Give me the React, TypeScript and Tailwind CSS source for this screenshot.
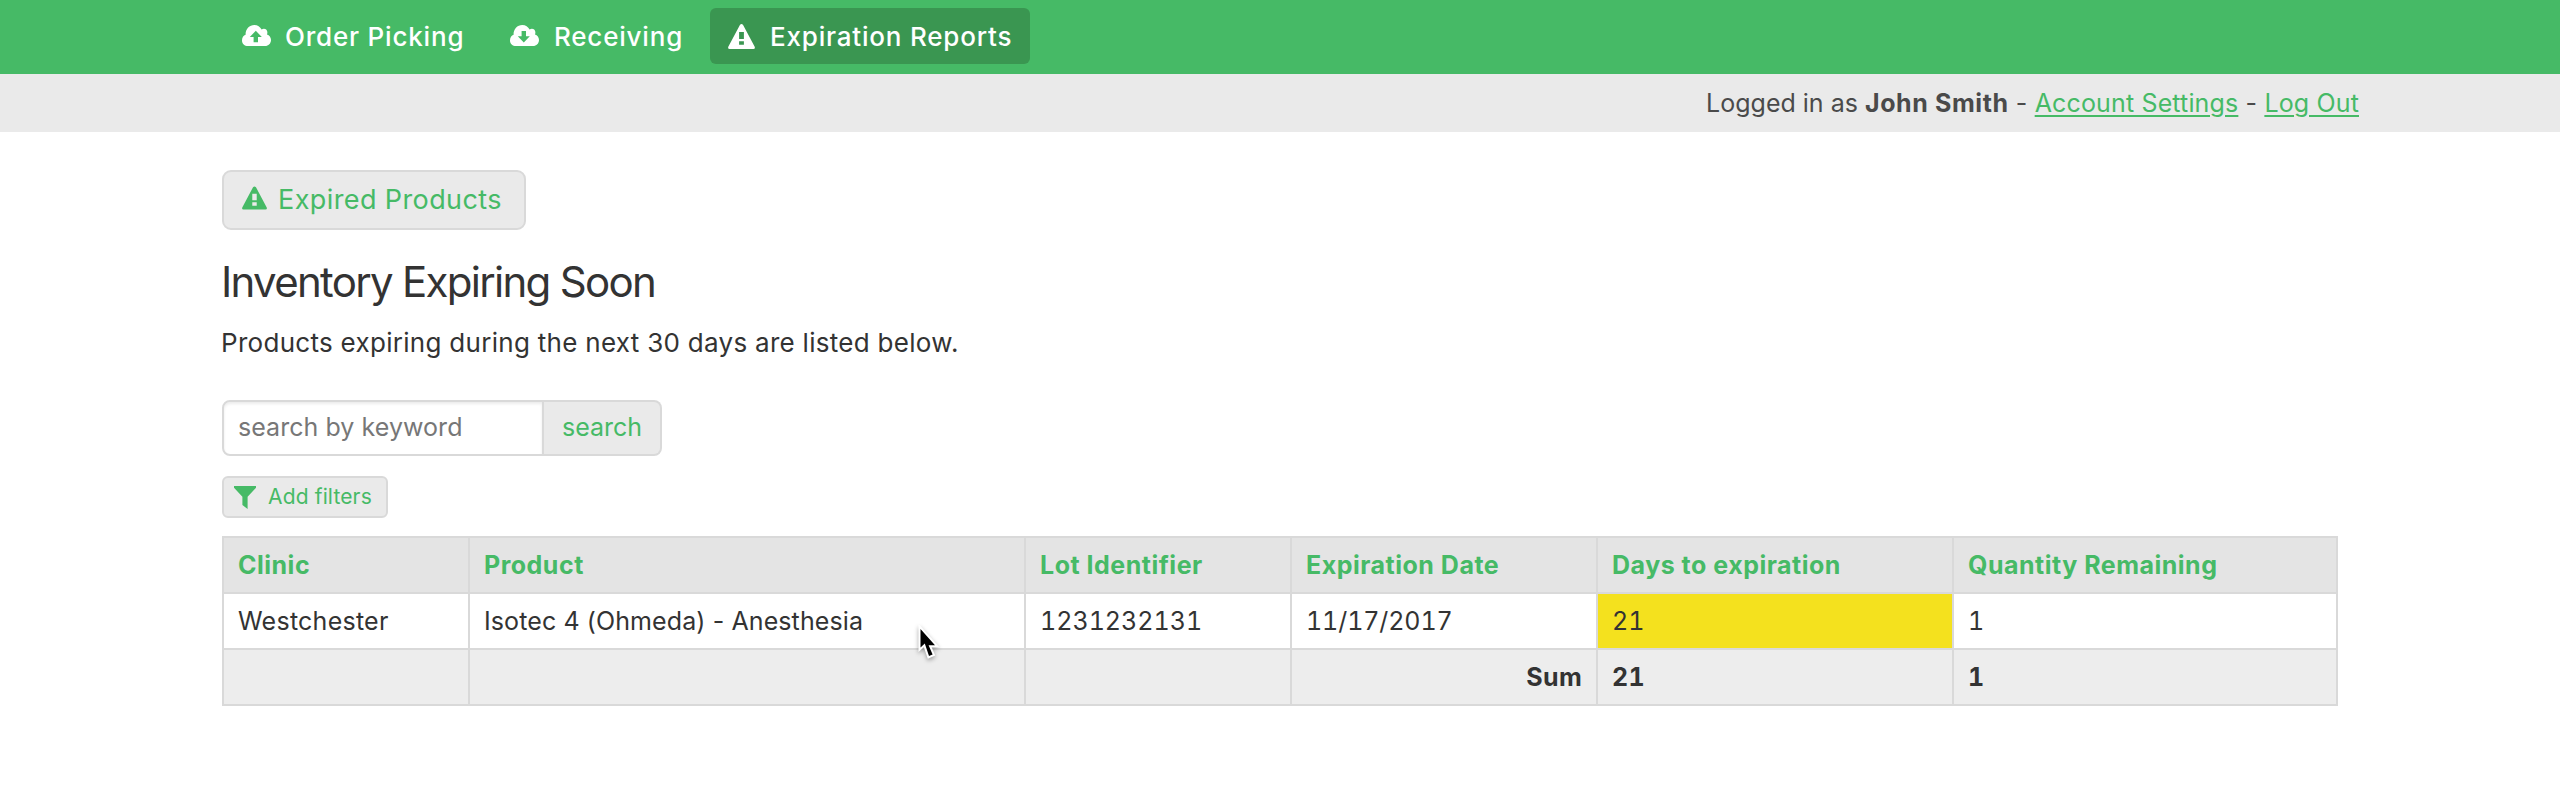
const CloudIcon = ({ down = false }: { down?: boolean }) => {
  return (
    <svg viewBox="0 0 29 21" className="h-[21px] w-[29px] shrink-0" fill="currentColor" fillRule="evenodd">
      <path
        d={
          "M6 21C2.6 21 0 18.7 0 15.4C0 12.6 1.4 10.6 3.6 9.8C3.3 4.2 7.4 0 12.3 0C15.6 0 18.2 1.8 19.6 4.5C20.4 4 21 3.8 21.8 3.8C24 3.8 25.4 5.4 25.4 7.4C25.4 8.1 25.2 8.8 25 9.4C27.4 10.1 29 12.3 29 15C29 18.4 26.5 21 23 21Z" +
          (down
            ? "M11.6 6V11.2H7.8L13.8 17.4L19.8 11.2H16V6Z"
            : "M13.8 5.8L7.8 12H11.6V17.2H16V12H19.8Z")
        }
      />
    </svg>
  );
};

const WarningIcon = ({ className }: { className: string }) => {
  return (
    <svg viewBox="0 0 27 25" className={className} fill="currentColor" fillRule="evenodd">
      <path d="M11.9 1Q13.5 -1 15.1 1L26.7 22.8Q27.4 25 25.4 25H1.6Q-0.4 25 0.3 22.8ZM11.1 8V15H15.9V8ZM11.1 17.2V20.8H15.9V17.2Z" />
    </svg>
  );
};

const Header = () => {
  return (
    <header className="bg-[#46ba66] h-[74px] pl-[224px] pt-2">
      <nav className="flex gap-2 text-white text-[26px] font-[450] tracking-[0.8px]">
        <a className="flex items-center w-[260px] h-14 pl-[18px] pb-px" href="#">
          <CloudIcon />
          <span className="ml-[14px] pt-px">Order Picking</span>
        </a>
        <a className="flex items-center w-[210px] h-14 pl-[18px] pb-px" href="#">
          <CloudIcon down />
          <span className="ml-[15px] pt-px">Receiving</span>
        </a>
        <a className="flex items-center w-80 h-14 pl-[18px] rounded-md bg-[#3a9651]" href="#">
          <WarningIcon className="h-[25px] w-[27px] shrink-0" />
          <span className="ml-[15px]">Expiration Reports</span>
        </a>
      </nav>
    </header>
  );
};

const UserBar = () => {
  return (
    <div className="flex items-center justify-end h-[58px] pr-[201px] pt-px bg-[#eaeaea] text-[25px] tracking-[0.15px] text-[#4a4a4a] whitespace-pre">
      <span className="tracking-normal">Logged in as </span>
      <strong className="font-bold tracking-[0.6px]">John Smith</strong>
      <span> - </span>
      <a className="text-[#46ba66] underline decoration-2 underline-offset-[3px]" href="#">
        Account Settings
      </a>
      <span> - </span>
      <a className="text-[#46ba66] underline decoration-2 underline-offset-[3px]" href="#">
        Log Out
      </a>
    </div>
  );
};

const columns = [
  { name: "Clinic", width: "w-[246px]" },
  { name: "Product", width: "w-[556px]" },
  { name: "Lot Identifier", width: "w-[266px]" },
  { name: "Expiration Date", width: "w-[306px]" },
  { name: "Days to expiration", width: "w-[356px]" },
  { name: "Quantity Remaining", width: "w-[384px]" },
];

const cell = "h-14 border-2 border-[#d9d9d9] px-[14px] py-0";

const InventoryTable = () => {
  return (
    <table className="mt-[18px] w-[2116px] table-fixed border-collapse text-left text-[25px] leading-9">
      <thead>
        <tr className="bg-[#e4e4e4] text-[#46ba66] tracking-[0.5px]">
          {columns.map((column) => (
            <th key={column.name} className={`${cell} ${column.width} font-bold`}>
              {column.name}
            </th>
          ))}
        </tr>
      </thead>
      <tbody>
        <tr>
          <td className={`${cell} tracking-[0.25px]`}>Westchester</td>
          <td className={`${cell} tracking-[0.1px]`}>Isotec 4 (Ohmeda) - Anesthesia</td>
          <td className={`${cell} tabular-nums`}>1231232131</td>
          <td className={`${cell} tabular-nums tracking-[-0.1px]`}>11/17/2017</td>
          <td className={`${cell} tabular-nums bg-[#f4e11e]`}>21</td>
          <td className={`${cell} tabular-nums`}>1</td>
        </tr>
        <tr className="bg-[#ededed] font-bold tracking-[0.3px] tabular-nums">
          <td className={cell}></td>
          <td className={cell}></td>
          <td className={cell}></td>
          <td className={`${cell} text-right`}>Sum</td>
          <td className={cell}>21</td>
          <td className={cell}>1</td>
        </tr>
      </tbody>
    </table>
  );
};

const Cursor = () => {
  return (
    <svg
      viewBox="0 0 24 36"
      className="absolute left-[917px] top-[625px] h-9 w-6 drop-shadow-[0_2px_2px_rgba(0,0,0,0.35)]"
    >
      <path
        d="M3.5 4V22.5L7.8 18.6L12 31L15.6 29.4L11.6 20.3H18Z"
        fill="#000"
        stroke="#fff"
        strokeWidth="4"
        paintOrder="stroke"
      />
    </svg>
  );
};

const App = () => {
  return (
    <div className="relative h-[812px] overflow-hidden bg-white font-['Inter','Liberation_Sans',sans-serif] text-[#333]">
      <Header />
      <UserBar />
      <main className="flex flex-col items-start pl-[222px] pt-[38px]">
        <a
          className="flex h-[60px] w-[304px] items-center rounded-[9px] border-2 border-[#d9d9d9] bg-[#eaeaea] pl-[18px] text-[27px] tracking-[0.4px] text-[#46ba66]"
          href="#"
        >
          <WarningIcon className="mb-1 h-6 w-[25px] shrink-0" />
          <span className="ml-[11px]">Expired Products</span>
        </a>
        <h1 className="-ml-px mt-[22px] h-[60px] text-[42px] leading-[60px] tracking-[-1.7px]">
          Inventory Expiring Soon
        </h1>
        <p className="-ml-px mt-[11px] h-10 text-[26px] leading-10 tracking-[0.29px]">
          Products expiring during the next 30 days are listed below.
        </p>
        <form className="mt-[37px] flex h-14 text-[25px]">
          <input
            className="w-[322px] rounded-l-lg border-2 border-[#d9d9d9] pl-[14px] tracking-[0.05px] shadow-[inset_0_2px_3px_rgba(0,0,0,0.08)] placeholder:text-[#777]"
            placeholder="search by keyword"
          />
          <button
            className="w-[118px] rounded-r-lg border-2 border-l-0 border-[#d9d9d9] bg-[#eaeaea] text-[#46ba66]"
            type="button"
          >
            search
          </button>
        </form>
        <button
          className="mt-5 flex h-[42px] w-[166px] items-center rounded-md border-2 border-[#d9d9d9] bg-[#eaeaea] pl-[10px] text-[21px] tracking-[0.15px] text-[#46ba66]"
          type="button"
        >
          <svg viewBox="0 0 22 23" className="h-[23px] w-[22px] shrink-0" fill="currentColor">
            <path d="M0 0H22V1.8L13.6 10.8V23L8.4 19V10.8L0 1.8Z" />
          </svg>
          <span className="ml-3">Add filters</span>
        </button>
        <InventoryTable />
      </main>
      <Cursor />
    </div>
  );
};

export default App;
